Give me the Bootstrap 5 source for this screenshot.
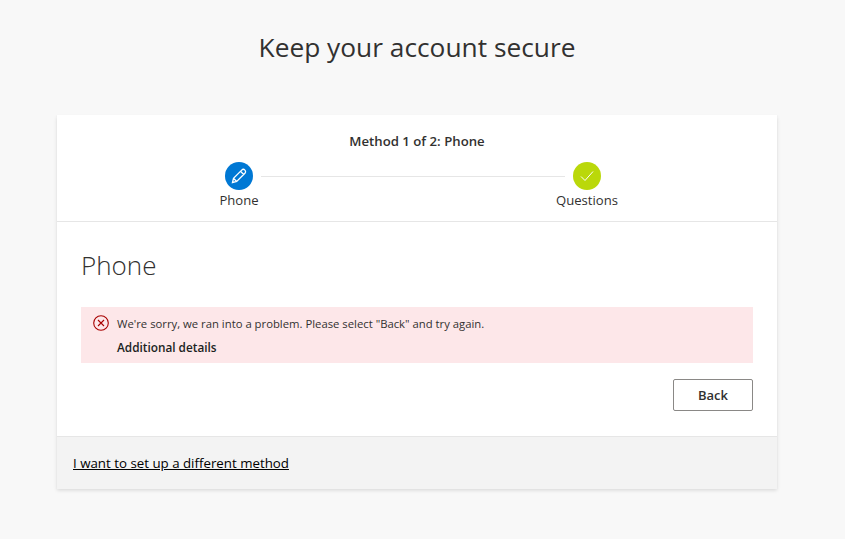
<!DOCTYPE html>
<html lang="en"><head><meta charset="utf-8">
<link href="https://cdn.jsdelivr.net/npm/bootstrap@5.3.0/dist/css/bootstrap.min.css" rel="stylesheet">
<style>
html,body{height:100%;overflow:hidden}
body{background:#f8f8f8;font-family:"Open Sans","Noto Sans",sans-serif;color:#323130}
.ttl{font-size:26.3px;line-height:36px;padding-top:29px;margin:0;font-weight:400;text-align:center;height:115px;width:834px}
.panel{width:720px;margin-left:57px;background:#fff;box-shadow:0 1.6px 3.6px rgba(0,0,0,.13),0 .3px .9px rgba(0,0,0,.11);height:374px}
.head{height:107px;border-bottom:1px solid #e6e6e6;padding-top:17px}
.mth{font-size:13.2px;font-weight:600;line-height:18px;text-align:center}
.stp{width:464px;margin:12px 0 0 124px}
.stpi{width:116px;font-size:13.1px;line-height:18px}
.stpi .dot{margin-bottom:1px}
.dot{width:28px;height:28px;border-radius:50%}
.ln{height:1px;background:#e6e6e6;margin:14px -36px 0}
.main{padding:0 24px;height:214px}
.hh{font-size:26px;font-weight:300;line-height:36px;margin:0;padding-top:25px;height:85px}
.err{background:#fde7e9;height:56px;font-size:11.3px;padding:8px 12px}
.msg{padding-top:1px}
.det{font-size:11.8px;margin-top:6px;color:#201f1e}
.bk{width:80px;height:32px;border:1px solid #8a8886;border-radius:2px;font-size:13px;font-weight:600;color:#323130;background:#fff;padding:1px 0 0;margin-top:16px}
.foot{height:53px;background:#f3f3f3;border-top:1px solid #e6e6e6;padding:1px 16px 0;font-size:13.3px}
.foot a{color:#000}
</style></head><body>
<h1 class="ttl">Keep your account secure</h1>
<div class="panel">
<div class="head">
<div class="mth">Method 1 of 2: Phone</div>
<div class="stp d-flex">
<div class="stpi d-flex flex-column align-items-center flex-shrink-0"><span class="dot d-flex align-items-center justify-content-center" style="background:#0078d4"><svg width="18" height="18" viewBox="0 0 18 18" fill="none" stroke="#fff" stroke-width="1.3"><path d="M2.5 15.5l1-4.2 8.2-8.2a1.9 1.9 0 0 1 3.2 3.2l-8.2 8.2zM10.5 4.3l3.2 3.2M3.5 11.3l3.2 3.2"/></svg></span>Phone</div>
<div class="ln flex-grow-1"></div>
<div class="stpi d-flex flex-column align-items-center flex-shrink-0"><span class="dot d-flex align-items-center justify-content-center" style="background:#bad80a"><svg width="16" height="16" viewBox="0 0 16 16" fill="none" stroke="#fff" stroke-width="1"><path d="M2 8.5l4 4 8-9"/></svg></span>Questions</div>
</div>
</div>
<div class="main">
<h2 class="hh">Phone</h2>
<div class="err d-flex gap-2">
<svg class="flex-shrink-0" width="16" height="16" viewBox="0 0 16 16" fill="none" stroke="#a80000" stroke-width="1.1"><circle cx="8" cy="8" r="7.3"/><path d="M5 5l6 6M11 5l-6 6"/></svg>
<div class="msg"><div>We're sorry, we ran into a problem. Please select "Back" and try again.</div><div class="fw-semibold det">Additional details</div></div>
</div>
<div class="d-flex justify-content-end"><button class="btn bk" type="button">Back</button></div>
</div>
<div class="foot d-flex align-items-center"><a href="#">I want to set up a different method</a></div>
</div>
<script src="https://cdn.jsdelivr.net/npm/bootstrap@5.3.0/dist/js/bootstrap.bundle.min.js"></script>
</body></html>
